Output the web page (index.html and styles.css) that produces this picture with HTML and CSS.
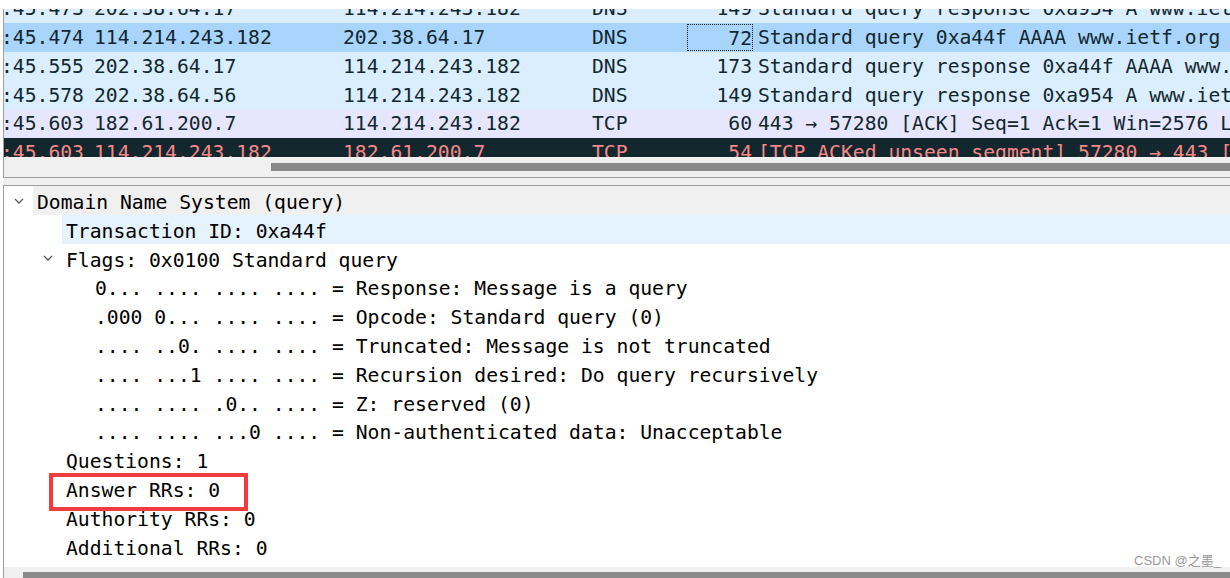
FILE: index.html
```html
<!DOCTYPE html>
<html lang="en">
<head>
<meta charset="utf-8">
<title>Wireshark - DNS query</title>
<link rel="stylesheet" href="styles.css">
</head>
<body>
<div class="app">
  <section class="packet-list">
    <div class="list-view">
      <div class="rows">
        <div class="row dns">
          <span class="c time">:45.473</span><span class="c">202.38.64.17</span><span class="c">114.214.243.182</span><span class="c">DNS</span><span class="c len">149</span><span class="c info">Standard query response 0xa954 A www.ietf.org CNAME</span>
        </div>
        <div class="row dns selected">
          <span class="c time">:45.474</span><span class="c">114.214.243.182</span><span class="c">202.38.64.17</span><span class="c">DNS</span><span class="c len focus"><span class="focus-box">72</span></span><span class="c info">Standard query 0xa44f AAAA www.ietf.org</span>
        </div>
        <div class="row dns">
          <span class="c time">:45.555</span><span class="c">202.38.64.17</span><span class="c">114.214.243.182</span><span class="c">DNS</span><span class="c len">173</span><span class="c info">Standard query response 0xa44f AAAA www.ietf.org CNAME</span>
        </div>
        <div class="row dns">
          <span class="c time">:45.578</span><span class="c">202.38.64.56</span><span class="c">114.214.243.182</span><span class="c">DNS</span><span class="c len">149</span><span class="c info">Standard query response 0xa954 A www.ietf.org CNAME</span>
        </div>
        <div class="row tcp">
          <span class="c time">:45.603</span><span class="c">182.61.200.7</span><span class="c">114.214.243.182</span><span class="c">TCP</span><span class="c len">60</span><span class="c info">443 → 57280 [ACK] Seq=1 Ack=1 Win=2576 Len=0</span>
        </div>
        <div class="row bad">
          <span class="c time">:45.603</span><span class="c">114.214.243.182</span><span class="c">182.61.200.7</span><span class="c">TCP</span><span class="c len">54</span><span class="c info">[TCP ACKed unseen segment] 57280 → 443 [ACK] Seq=1</span>
        </div>
      </div>
    </div>
    <div class="hscroll top-scroll"><div class="thumb"></div></div>
  </section>

  <div class="splitter"></div>

  <section class="details">
    <div class="tree">
      <div class="node lvl0">
        <span class="branch"><svg class="chev" width="10" height="6" viewBox="0 0 10 6"><polyline points="1,1 5,5 9,1"/></svg></span>
        <span class="label hover">Domain Name System (query)</span>
      </div>
      <div class="node lvl1">
        <span class="branch"></span>
        <span class="label current">Transaction ID: 0xa44f</span>
      </div>
      <div class="node lvl1">
        <span class="branch"><svg class="chev" width="10" height="6" viewBox="0 0 10 6"><polyline points="1,1 5,5 9,1"/></svg></span>
        <span class="label">Flags: 0x0100 Standard query</span>
      </div>
      <div class="node lvl2"><span class="branch"></span><span class="label">0... .... .... .... = Response: Message is a query</span></div>
      <div class="node lvl2"><span class="branch"></span><span class="label">.000 0... .... .... = Opcode: Standard query (0)</span></div>
      <div class="node lvl2"><span class="branch"></span><span class="label">.... ..0. .... .... = Truncated: Message is not truncated</span></div>
      <div class="node lvl2"><span class="branch"></span><span class="label">.... ...1 .... .... = Recursion desired: Do query recursively</span></div>
      <div class="node lvl2"><span class="branch"></span><span class="label">.... .... .0.. .... = Z: reserved (0)</span></div>
      <div class="node lvl2"><span class="branch"></span><span class="label">.... .... ...0 .... = Non-authenticated data: Unacceptable</span></div>
      <div class="node lvl1"><span class="branch"></span><span class="label">Questions: 1</span></div>
      <div class="node lvl1"><span class="branch"></span><span class="label">Answer RRs: 0</span></div>
      <div class="node lvl1"><span class="branch"></span><span class="label">Authority RRs: 0</span></div>
      <div class="node lvl1"><span class="branch"></span><span class="label">Additional RRs: 0</span></div>
    </div>
    <div class="hscroll bottom-scroll"><div class="thumb"></div></div>
    <div class="highlight-box"></div>
    <div class="watermark">CSDN @之墨_</div>
  </section>
</div>
</body>
</html>
```

FILE: styles.css
```css
html, body {
  margin: 0;
  padding: 0;
  background: #ffffff;
}

body {
  width: 1230px;
  height: 578px;
  overflow: hidden;
  font-family: "DejaVu Sans Mono", "Liberation Mono", monospace;
  font-size: 19.7px;
}

.app {
  padding: 9px 0 0 3px;
}

/* ---------- packet list ---------- */
.packet-list {
  border-left: 1px solid #a0a0a0;
  border-bottom: 1px solid #a0a0a0;
}

.list-view {
  height: 148px;
  overflow: hidden;
}

.rows {
  margin-top: -14.8px;
}

.row {
  display: grid;
  grid-template-columns: 90px 249px 249px 95px 66px 1fr;
  height: 28.8px;
  line-height: 30.8px;
  white-space: nowrap;
  color: #12272e;
}

.row.dns { background: #daeeff; }
.row.dns.selected { background: #a9d5fc; }
.row.tcp { background: #e7e6ff; }
.row.bad { background: #12272e; color: #f78787; }

.c {
  overflow: hidden;
  min-width: 0;
}

.c.time {
  text-indent: -3px;
}

.c.len {
  text-align: right;
  padding-right: 1px;
}

.c.len.focus {
  padding: 1px 0;
  box-sizing: border-box;
}

.focus-box {
  display: block;
  height: 100%;
  box-sizing: border-box;
  border: 1px dotted #1b1b1b;
  line-height: 27px;
}

.c.info {
  padding-left: 5px;
}

/* ---------- scrollbars ---------- */
.hscroll {
  background: #f0f0f0;
  overflow: hidden;
}

.hscroll .thumb {
  background: #8a8a8a;
}

.top-scroll {
  height: 20px;
}

.top-scroll .thumb {
  margin: 6px 0 0 267px;
  height: 8px;
}

.bottom-scroll {
  height: 11px;
}

.bottom-scroll .thumb {
  margin: 5px 0 0 19px;
  height: 8px;
}

/* ---------- splitter ---------- */
.splitter {
  height: 7px;
  background: #f0f0f0;
}

/* ---------- details tree ---------- */
.details {
  position: relative;
  border-left: 1px solid #a0a0a0;
  border-top: 1px solid #a0a0a0;
}

.tree {
  height: 381px;
  overflow: hidden;
}

.node {
  display: flex;
  height: 28.8px;
  line-height: 33.6px;
  white-space: pre;
  color: #000000;
}

.node.lvl1 { padding-left: 29px; }
.node.lvl2 { padding-left: 58px; }

.branch {
  flex: 0 0 29px;
  display: flex;
  align-items: center;
  justify-content: center;
}

.chev {
  display: block;
  margin-top: 1px;
}

.chev polyline {
  fill: none;
  stroke: #5a5a5a;
  stroke-width: 1.3;
}

.label {
  flex: 1;
  padding-left: 4px;
}

.label.hover { background: #f0f0f0; }
.label.current { background: #e5f3ff; }

/* ---------- overlays ---------- */
.highlight-box {
  position: absolute;
  left: 45px;
  top: 287px;
  width: 199px;
  height: 38px;
  box-sizing: border-box;
  border: 4px solid #f03c3c;
}

.watermark {
  position: absolute;
  left: 1130px;
  top: 367px;
  font-family: "Liberation Sans", "Noto Sans CJK SC", sans-serif;
  font-size: 13px;
  line-height: 16px;
  color: #999999;
  white-space: nowrap;
}
```
